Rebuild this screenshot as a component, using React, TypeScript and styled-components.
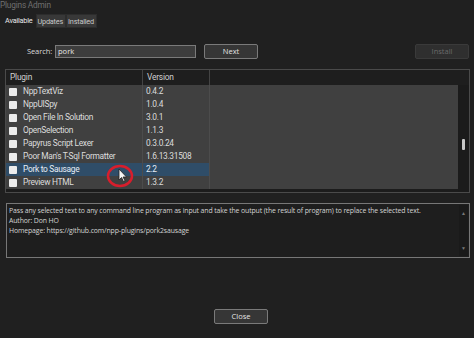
import React from "react";
import styled, { createGlobalStyle } from "styled-components";

const Global = createGlobalStyle`
  html, body { margin: 0; padding: 0; background: #202020; }
  body { font-family: "Open Sans", "Noto Sans", "Liberation Sans", sans-serif; }
`;

const Window = styled.div`
  position: relative;
  width: 474px;
  height: 338px;
  overflow: hidden;
  background: #202020;
  color: #d8d8d8;
  display: flex;
  flex-direction: column;
`;

const Title = styled.div`
  height: 12px;
  line-height: 12px;
  font-family: Roboto, "Open Sans", sans-serif;
  font-size: 8.3px;
  letter-spacing: -0.2px;
  color: #6f6f6f;
  margin-top: -1px;
`;

const Tabs = styled.div`
  display: flex;
  margin-top: 2px;
  padding-left: 3px;
  height: 15px;
`;

const Tab = styled.div<{ $active?: boolean }>`
  font-family: Roboto, "Open Sans", sans-serif;
  font-size: 7.3px;
  letter-spacing: -0.2px;
  line-height: 13px;
  padding: 0 2px 0 1px;
  color: ${(p) => (p.$active ? "#e8e8e8" : "#c8c8c8")};
  background: ${(p) => (p.$active ? "transparent" : "#383838")};
  border: 1px solid ${(p) => (p.$active ? "transparent" : "#2c2c2c")};
  margin-top: ${(p) => (p.$active ? "0" : "1px")};
`;

const SearchRow = styled.div`
  display: flex;
  align-items: center;
  margin-top: 15px;
  padding: 0 5px 0 27px;
  height: 16px;
`;

const Label = styled.span`
  font-size: 7.5px;
  letter-spacing: -0.1px;
  color: #d8d8d8;
  margin-right: 3px;
`;

const Input = styled.div`
  width: 137px;
  height: 11px;
  border: 1px solid #7a7a7a;
  background: #3d3d3d;
  font-size: 7.5px;
  line-height: 11px;
  padding-left: 2px;
  color: #e8e8e8;
`;

const Button = styled.div<{ $disabled?: boolean }>`
  width: 52px;
  height: 13px;
  border: 1px solid ${(p) => (p.$disabled ? "#3a3a3a" : "#7a7a7a")};
  border-radius: 2px;
  background: ${(p) => (p.$disabled ? "#2f2f2f" : "#363636")};
  color: ${(p) => (p.$disabled ? "#6a6a6a" : "#e4e4e4")};
  font-size: 7.5px;
  line-height: 13px;
  text-align: center;
`;

const NextButton = styled(Button)`
  margin-left: 8px;
`;

const Spacer = styled.div`
  flex: 1;
`;

const ListBox = styled.div`
  position: relative;
  margin: 10px 4px 0 5px;
  height: 122px;
  border: 1px solid #4a4a4a;
  background: #1c1c1c;
  display: flex;
  flex-direction: column;
`;

const HeaderRow = styled.div`
  display: grid;
  grid-template-columns: 137px 67px 1fr;
  height: 15px;
  background: #1e1e1e;
`;

const HeaderCell = styled.div`
  font-family: Roboto, "Open Sans", sans-serif;
  font-size: 8.4px;
  letter-spacing: -0.2px;
  line-height: 15px;
  color: #d0d0d0;
  padding-left: 4px;
  border-right: 1px solid #444;
  &:last-child { border-right: none; }
`;

const Body = styled.div`
  display: flex;
  flex: 1;
`;

const Rows = styled.div`
  width: 452px;
  height: 104px;
  background: #404040;
`;

const Row = styled.div`
  display: grid;
  grid-template-columns: 137px 67px 1fr;
  height: 13px;
`;

const Cell = styled.div<{ $selected?: boolean }>`
  display: flex;
  align-items: center;
  font-family: Roboto, "Open Sans", sans-serif;
  font-size: 8.4px;
  letter-spacing: -0.3px;
  line-height: 13px;
  white-space: nowrap;
  overflow: hidden;
  color: ${(p) => (p.$selected ? "#e6eef6" : "#dcdcdc")};
  background: ${(p) => (p.$selected ? "#2f4d68" : "transparent")};
  border-right: 1px solid #4c4c4c;
  padding-left: 3px;
  &:last-child { border-right: none; background: transparent; }
`;

const Check = styled.span`
  width: 8px;
  height: 8px;
  border-radius: 1px;
  background: #ececec;
  margin-right: 6px;
  flex-shrink: 0;
`;

const ScrollTrack = styled.div`
  position: relative;
  flex: 1;
  background: #1b1b1b;
`;

const Thumb = styled.div`
  position: absolute;
  left: 4px;
  top: 54px;
  width: 3px;
  height: 11px;
  background: #c8c8c8;
  border-radius: 1px;
`;

const Desc = styled.div`
  position: relative;
  margin: 10px 4px 0 6px;
  height: 51px;
  border: 1px solid #777;
  background: #1e1e1e;
  padding: 2px 0 0 2px;
  font-size: 6.9px;
  letter-spacing: -0.12px;
  line-height: 10px;
  color: #d4d4d4;
  white-space: nowrap;
`;

const DescScroll = styled.div`
  position: absolute;
  right: 1px;
  top: 1px;
  bottom: 1px;
  width: 9px;
  background: #1a1a1a;
  display: flex;
  flex-direction: column;
  justify-content: space-between;
  align-items: center;
  font-size: 5px;
  color: #777;
  padding: 3px 0;
  box-sizing: border-box;
`;

const CloseRow = styled.div`
  margin-top: 51px;
  padding-left: 214px;
`;

const Overlay = styled.svg`
  position: absolute;
  left: 104px;
  top: 162px;
`;

const plugins: [string, string][] = [
  ["NppTextViz", "0.4.2"],
  ["NppUISpy", "1.0.4"],
  ["Open File In Solution", "3.0.1"],
  ["OpenSelection", "1.1.3"],
  ["Papyrus Script Lexer", "0.3.0.24"],
  ["Poor Man's T-Sql Formatter", "1.6.13.31508"],
  ["Pork to Sausage", "2.2"],
  ["Preview HTML", "1.3.2"],
];

export default function App() {
  return (
    <>
      <Global />
      <Window>
        <Title>Plugins Admin</Title>
        <Tabs>
          <Tab $active>Available</Tab>
          <Tab>Updates</Tab>
          <Tab>Installed</Tab>
        </Tabs>
        <SearchRow>
          <Label>Search:</Label>
          <Input>pork</Input>
          <NextButton>Next</NextButton>
          <Spacer />
          <Button $disabled>Install</Button>
        </SearchRow>
        <ListBox>
          <HeaderRow>
            <HeaderCell>Plugin</HeaderCell>
            <HeaderCell>Version</HeaderCell>
            <HeaderCell />
          </HeaderRow>
          <Body>
            <Rows>
              {plugins.map(([name, ver]) => {
                const sel = name === "Pork to Sausage";
                return (
                  <Row key={name}>
                    <Cell $selected={sel}>
                      <Check />
                      {name}
                    </Cell>
                    <Cell $selected={sel}>{ver}</Cell>
                    <Cell />
                  </Row>
                );
              })}
            </Rows>
            <ScrollTrack>
              <Thumb />
            </ScrollTrack>
          </Body>
        </ListBox>
        <Desc>
          Pass any selected text to any command line program as input and take the output (the result of program) to replace the selected text.
          <br />
          Author: Don HO
          <br />
          Homepage: https://github.com/npp-plugins/pork2sausage
          <DescScroll>
            <span>▲</span>
            <span>▼</span>
          </DescScroll>
        </Desc>
        <CloseRow>
          <Button>Close</Button>
        </CloseRow>
        <Overlay width="34" height="28" viewBox="0 0 34 28">
          <ellipse cx="16" cy="14" rx="12" ry="10" fill="none" stroke="#d81e2c" strokeWidth="2.5" />
          <path d="M15 7 L15 18 L17.5 15.5 L19.5 19.5 L21 18.8 L19 15 L22.5 15 Z" fill="#f4f4f4" stroke="#222" strokeWidth="0.8" />
        </Overlay>
      </Window>
    </>
  );
}
